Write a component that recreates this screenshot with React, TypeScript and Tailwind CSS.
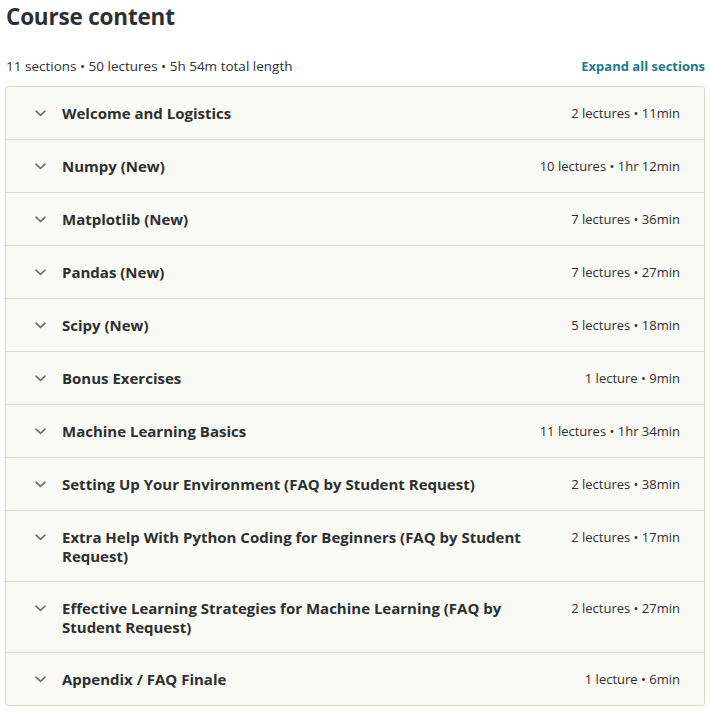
interface Section {
    title: string;
    meta: string;
}

const sections: Section[] = [
    { title: "Welcome and Logistics", meta: "2 lectures • 11min" },
    { title: "Numpy (New)", meta: "10 lectures • 1hr 12min" },
    { title: "Matplotlib (New)", meta: "7 lectures • 36min" },
    { title: "Pandas (New)", meta: "7 lectures • 27min" },
    { title: "Scipy (New)", meta: "5 lectures • 18min" },
    { title: "Bonus Exercises", meta: "1 lecture • 9min" },
    { title: "Machine Learning Basics", meta: "11 lectures • 1hr 34min" },
    {
        title: "Setting Up Your Environment (FAQ by Student Request)",
        meta: "2 lectures • 38min",
    },
    {
        title: "Extra Help With Python Coding for Beginners (FAQ by Student Request)",
        meta: "2 lectures • 17min",
    },
    {
        title: "Effective Learning Strategies for Machine Learning (FAQ by Student Request)",
        meta: "2 lectures • 27min",
    },
    { title: "Appendix / FAQ Finale", meta: "1 lecture • 6min" },
];

function Chevron() {
    return (
        <span className="flex items-center justify-center w-[17px] h-[19px] shrink-0">
            <svg width="11" height="7" viewBox="0 0 11 7" fill="none">
                <path
                    d="M1 1.2 L5.5 5.4 L10 1.2"
                    stroke="#6a6f73"
                    strokeWidth="1.6"
                    strokeLinecap="round"
                    strokeLinejoin="round"
                />
            </svg>
        </span>
    );
}

export default function App() {
    return (
        <div
            className="bg-white px-[5px] text-[#2d2f31]"
            style={{ fontFamily: '"Open Sans", "Noto Sans", sans-serif' }}
        >
            <h2 className="text-[22.5px] font-bold leading-[34px] pl-[1px] tracking-[-0.2px]">
                Course content
            </h2>

            {/* Summary line */}
            <div className="flex items-center justify-between mt-[22px] mb-[10px]">
                <span className="text-[13.5px] leading-[20px] pl-[1px]">
                    11 sections • 50 lectures • 5h 54m total length
                </span>
                <button className="text-[13px] font-bold leading-[20px] text-[#1c7a8a]">
                    Expand all sections
                </button>
            </div>

            {/* Sections */}
            <div className="border border-[#d9d9c8] rounded-[3px] bg-[#f9f9f5]">
                {sections.map((s) => (
                    <div
                        key={s.title}
                        className="flex items-start min-h-[53px] first:min-h-[52px] py-[15.5px] pl-[26px] pr-[24px] border-t border-[#d9d9c8] first:border-t-0"
                    >
                        <div className="flex items-start flex-1 min-w-0 pr-[28px] pt-[1px]">
                            <Chevron />
                            <span className="ml-[13px] text-[15px] font-bold leading-[19px]">
                                {s.title}
                            </span>
                        </div>
                        <span className="text-[13px] leading-[19px] mt-[1px] whitespace-nowrap">
                            {s.meta}
                        </span>
                    </div>
                ))}
            </div>
        </div>
    );
}
